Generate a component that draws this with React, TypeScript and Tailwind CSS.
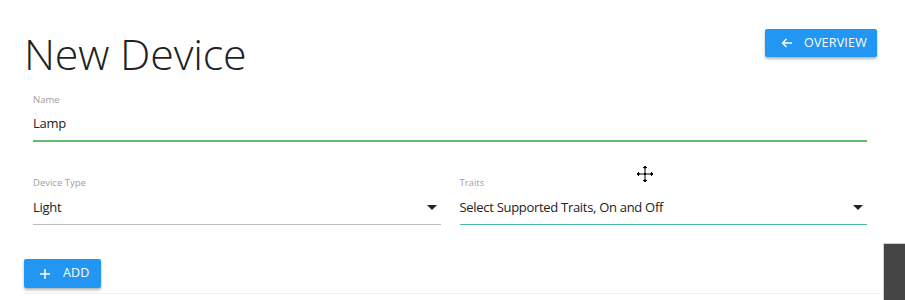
import React from "react";

function Caret() {
  return (
    <svg width="10" height="5" viewBox="0 0 10 5" className="shrink-0">
      <path d="M0 0 L10 0 L5 5 Z" fill="#222" />
    </svg>
  );
}

function MoveCursor() {
  return (
    <svg width="20" height="20" viewBox="0 0 20 20">
      <path
        d="M10 1 L13.5 4.5 L11 4.5 L11 9 L15.5 9 L15.5 6.5 L19 10 L15.5 13.5 L15.5 11 L11 11 L11 15.5 L13.5 15.5 L10 19 L6.5 15.5 L9 15.5 L9 11 L4.5 11 L4.5 13.5 L1 10 L4.5 6.5 L4.5 9 L9 9 L9 4.5 L6.5 4.5 Z"
        fill="#000"
        stroke="#fff"
        strokeWidth="1"
        strokeLinejoin="round"
      />
    </svg>
  );
}

export default function App() {
  return (
    <div
      className="relative w-[905px] h-[300px] overflow-hidden bg-white text-[#222]"
      style={{ fontFamily: '"Open Sans", "Noto Sans", sans-serif' }}
    >
      <div className="flex flex-col pl-[24px] pr-[28px]">
        <div className="flex justify-between items-start">
          <h1 className="text-[43px] leading-none font-[350] text-[#222] mt-[32px] ml-[0px] tracking-[-0.2px]">
            New Device
          </h1>
          <button className="mt-[29px] flex items-center h-[28px] w-[112px] pl-[16px] bg-[#2196f3] text-white rounded-[2px] shadow-[0_2px_3px_rgba(0,0,0,0.3)]">
            <svg width="12" height="12" viewBox="0 0 12 12" className="mr-[11px]">
              <path d="M11 6 H1.5 M5.5 2 L1.5 6 L5.5 10" stroke="#fff" strokeWidth="1.5" fill="none" />
            </svg>
            <span className="text-[12.5px] tracking-[0.2px]">OVERVIEW</span>
          </button>
        </div>

        <div className="flex flex-col pl-[9px] pr-[10px] mt-[18px]">
          <div className="flex flex-col">
            <label className="text-[9.5px] leading-[14px] text-[#9e9e9e]">Name</label>
            <div className="text-[13px] tracking-[-0.3px] leading-[20px] mt-[6px] pb-[7px] border-b-2 border-[#66bb6a]">
              Lamp
            </div>
          </div>

          <div className="flex gap-[19px] mt-[34px]">
            <div className="flex flex-col flex-1">
              <label className="text-[9.5px] leading-[14px] text-[#9e9e9e]">Device Type</label>
              <div className="flex items-center justify-between mt-[7px] pb-[7px] pr-[4px] border-b border-[#bdbdbd]">
                <span className="text-[13px] tracking-[-0.3px] leading-[20px]">Light</span>
                <Caret />
              </div>
            </div>
            <div className="flex flex-col flex-1">
              <label className="text-[9.5px] leading-[14px] text-[#9e9e9e]">Traits</label>
              <div className="flex items-center justify-between mt-[7px] pb-[7px] pr-[4px] border-b-[1.5px] border-[#4db6ac]">
                <span className="text-[13px] tracking-[-0.3px] leading-[20px]">Select Supported Traits, On and Off</span>
                <Caret />
              </div>
            </div>
          </div>
        </div>

        <div className="mt-[34px] flex">
          <button className="flex items-center h-[29px] w-[77px] pl-[15px] bg-[#2196f3] text-white rounded-[2px] shadow-[0_2px_3px_rgba(0,0,0,0.3)]">
            <svg width="12" height="12" viewBox="0 0 12 12" className="mr-[12px]">
              <path d="M6 1 V11 M1 6 H11" stroke="#fff" strokeWidth="1.5" fill="none" />
            </svg>
            <span className="text-[12.5px] tracking-[0.2px]">ADD</span>
          </button>
        </div>
        <div className="mt-[5px] h-px bg-[#f0f0f0] mr-[-4px]" />
      </div>

      <div className="absolute left-[635px] top-[164px]">
        <MoveCursor />
      </div>
      <div className="absolute left-[883px] top-[243px] w-[22px] h-[57px] bg-[#454545] border-l border-t border-[#cfcfcf]" />
    </div>
  );
}
